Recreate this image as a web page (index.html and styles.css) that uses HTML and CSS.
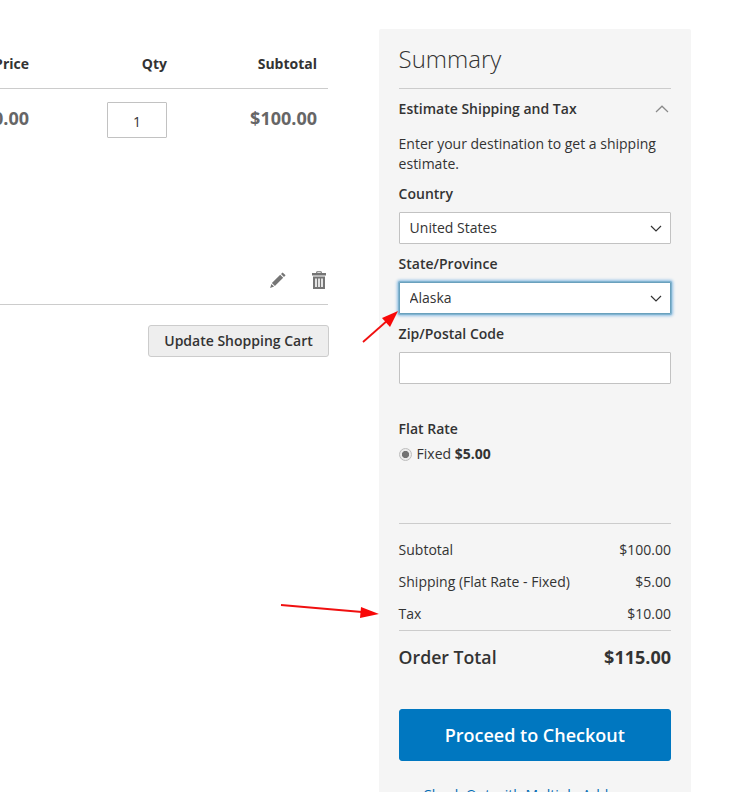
FILE: index.html
```html
<!DOCTYPE html>
<html lang="en">
<head>
<meta charset="utf-8">
<title>Shopping Cart</title>
<link rel="stylesheet" href="styles.css">
</head>
<body>
<div class="page">
  <main class="cart">
    <div class="cart-grid cart-head">
      <div class="cell-end">Price</div>
      <div class="cell-end">Qty</div>
      <div class="cell-end">Subtotal</div>
    </div>
    <div class="cart-grid cart-item">
      <div class="cell-end money">$100.00</div>
      <div class="cell-end"><input class="qty" type="text" value="1" aria-label="Qty"></div>
      <div class="cell-end money">$100.00</div>
    </div>
    <div class="item-actions">
      <svg class="icon-edit" width="16" height="16" viewBox="0 0 16 16" aria-label="Edit"><path fill="#757575" d="M12.6 0.4 L15.6 3.3 L14 5 L11 2 Z M10.2 2.8 L13.2 5.8 L4.9 14 L1.9 11.1 Z M1.4 11.9 L4.1 14.6 L0.1 16 Z"/></svg>
      <svg class="icon-trash" width="14" height="18" viewBox="0 0 14 18" aria-label="Remove"><path fill="#757575" fill-rule="evenodd" d="M4.6 0.2 H9.4 L10 2 H14 V4.4 H0 V2 H4 Z M5.4 1.2 L5.2 2 H8.8 L8.6 1.2 Z M1 5.4 H13 V18 H1 Z M3.2 7.4 V16 H4.8 V7.4 Z M6.2 7.4 V16 H7.8 V7.4 Z M9.2 7.4 V16 H10.8 V7.4 Z"/></svg>
    </div>
    <div class="cart-actions">
      <button class="btn-update" type="button">Update Shopping Cart</button>
    </div>
  </main>

  <aside class="summary">
    <h2 class="summary-title">Summary</h2>
    <div class="estimate-head">
      <span>Estimate Shipping and Tax</span>
      <svg width="14" height="8" viewBox="0 0 14 8"><path fill="none" stroke="#8a8a8a" stroke-width="1.2" d="M1 7 L7 1.2 L13 7"/></svg>
    </div>
    <p class="estimate-note">Enter your destination to get a shipping estimate.</p>

    <label class="field-label">Country</label>
    <div class="select-wrap">
      <select class="control"><option>United States</option></select>
      <svg class="chevron" width="12" height="7" viewBox="0 0 12 7"><path fill="none" stroke="#333" stroke-width="1.2" d="M1 1 L6 6 L11 1"/></svg>
    </div>

    <label class="field-label">State/Province</label>
    <div class="select-wrap">
      <select class="control control-focus"><option>Alaska</option></select>
      <svg class="chevron" width="12" height="7" viewBox="0 0 12 7"><path fill="none" stroke="#333" stroke-width="1.2" d="M1 1 L6 6 L11 1"/></svg>
    </div>

    <label class="field-label">Zip/Postal Code</label>
    <input class="control" type="text" aria-label="Zip/Postal Code">

    <div class="rate-title">Flat Rate</div>
    <div class="rate-option">
      <span class="radio"></span>
      <span>Fixed <b class="rate-price">$5.00</b></span>
    </div>

    <div class="totals">
      <div class="total-row"><span>Subtotal</span><span>$100.00</span></div>
      <div class="total-row"><span>Shipping (Flat Rate - Fixed)</span><span>$5.00</span></div>
      <div class="total-row"><span>Tax</span><span>$10.00</span></div>
    </div>
    <div class="grand-total"><span class="grand-label">Order Total</span><span>$115.00</span></div>

    <button class="btn-checkout" type="button">Proceed to Checkout</button>
    <a class="multi-link" href="#">Check Out with Multiple Addresses</a>
  </aside>

  <svg class="annotations" width="755" height="792" viewBox="0 0 755 792" aria-hidden="true">
    <path fill="none" stroke="#f01010" stroke-width="1.8" d="M363 342 L388 320"/>
    <path fill="#f80808" d="M398 311 L390 327 L382 318 Z"/>
    <path fill="none" stroke="#f01010" stroke-width="1.8" d="M281 605 L362 612"/>
    <path fill="#f80808" d="M379 614 L360 618 L361 607 Z"/>
  </svg>
</div>
</body>
</html>
```

FILE: styles.css
```css
* {
  box-sizing: border-box;
}

html,
body {
  margin: 0;
  height: 100%;
  overflow: hidden;
  background: #fff;
}

body {
  font-family: "Open Sans", "Liberation Sans", sans-serif;
  font-size: 14px;
  line-height: 20px;
  color: #333;
}

.page {
  position: relative;
  display: flex;
  width: 755px;
  height: 792px;
  overflow: hidden;
}

/* Cart column */
.cart {
  flex: 0 0 329px;
  width: 329px;
  overflow: hidden;
  padding-top: 29px;
}

.cart-grid {
  display: grid;
  grid-template-columns: 29px 138px 150px;
  width: 317px;
}

.cell-end {
  display: flex;
  justify-content: flex-end;
  white-space: nowrap;
}

.cart-head {
  box-sizing: content-box;
  height: 59px;
  padding-right: 11px;
  padding-top: 0;
  border-bottom: 1px solid #ccc;
  align-items: center;
  font-weight: 700;
  font-size: 14px;
}

.cart-head .cell-end {
  padding-top: 11px;
}

.cart-item {
  height: 167px;
  padding-top: 13px;
  align-items: start;
}

.money {
  font-size: 18px;
  line-height: 32px;
  font-weight: 700;
  color: #666;
}

.qty {
  width: 60px;
  height: 36px;
  padding: 3px 0 0;
  border: 1px solid #c2c2c2;
  border-radius: 1px;
  background: #fff;
  font: inherit;
  color: #333;
  text-align: center;
}

.item-actions {
  display: flex;
  justify-content: flex-end;
  align-items: center;
  gap: 26px;
  width: 328px;
  height: 49px;
  padding: 0 2px 1px 0;
  border-bottom: 1px solid #ccc;
}

.icon-trash {
  flex: none;
}

.cart-actions {
  display: flex;
  justify-content: flex-end;
  padding-top: 20px;
}

.btn-update {
  width: 181px;
  height: 32px;
  padding: 0;
  border: 1px solid #ccc;
  border-radius: 3px;
  background: #eee;
  font: 600 14px/20px "Open Sans", "Liberation Sans", sans-serif;
  color: #333;
}

/* Summary column */
.summary {
  flex: 0 0 312px;
  width: 312px;
  height: 820px;
  margin: 29px 0 0 50px;
  padding: 0 20px 0 19.6px;
  background: #f5f5f5;
  border-radius: 2px 2px 0 0;
}

.summary-title {
  margin: 0;
  height: 60px;
  padding-top: 12px;
  border-bottom: 1px solid #ccc;
  font-size: 24px;
  line-height: 36px;
  font-weight: 300;
  color: #333;
}

.estimate-head {
  display: flex;
  justify-content: space-between;
  align-items: center;
  height: 40px;
  padding-right: 2px;
  font-weight: 600;
}

.estimate-note {
  margin: 5px 0 0;
}

.field-label {
  display: block;
  margin-top: 10px;
  height: 28px;
  font-weight: 600;
}

.select-wrap {
  position: relative;
}

.control {
  display: block;
  width: 100%;
  height: 32px;
  padding: 0 10px;
  border: 1px solid #c2c2c2;
  border-radius: 1px;
  background: #fff;
  font: inherit;
  color: #333;
  appearance: none;
}

.control-focus {
  border-color: #6aa1bd;
  box-shadow: 0 0 0 1px #82b4d0, 0 0 3px 2px #8fbfe4;
}

.chevron {
  position: absolute;
  top: 13px;
  right: 9px;
}

.rate-title {
  margin-top: 35px;
  font-weight: 600;
}

.rate-option {
  display: flex;
  align-items: center;
  gap: 5px;
  margin-top: 5px;
}

.radio {
  flex: none;
  width: 13px;
  height: 13px;
  border: 1.5px solid #bdbdbd;
  border-radius: 50%;
  background: radial-gradient(circle, #737373 0 3.2px, #ececec 4px);
}

.rate-price {
  font-weight: 700;
}

.totals {
  margin-top: 59px;
  padding: 10px 0 0;
  border-top: 1px solid #ccc;
}

.total-row {
  display: flex;
  justify-content: space-between;
  align-items: center;
  height: 32px;
}

.grand-total {
  display: flex;
  justify-content: space-between;
  align-items: center;
  height: 52px;
  border-top: 1px solid #ccc;
  font-size: 18px;
  font-weight: 700;
}

.grand-label {
  font-size: 17.7px;
  font-weight: 600;
}

.btn-checkout {
  display: block;
  width: 100%;
  height: 52px;
  margin-top: 27px;
  padding: 0;
  border: 1px solid #0077c0;
  border-radius: 3px;
  background: #0077c0;
  font: 600 18px/22px "Open Sans", "Liberation Sans", sans-serif;
  color: #fff;
}

.multi-link {
  display: block;
  margin-top: 24px;
  padding-left: 3px;
  text-align: center;
  color: #006bb4;
  text-decoration: none;
}

/* Hand-drawn arrows lying over the screenshot */
.annotations {
  position: absolute;
  top: 0;
  left: 0;
  pointer-events: none;
}
```
